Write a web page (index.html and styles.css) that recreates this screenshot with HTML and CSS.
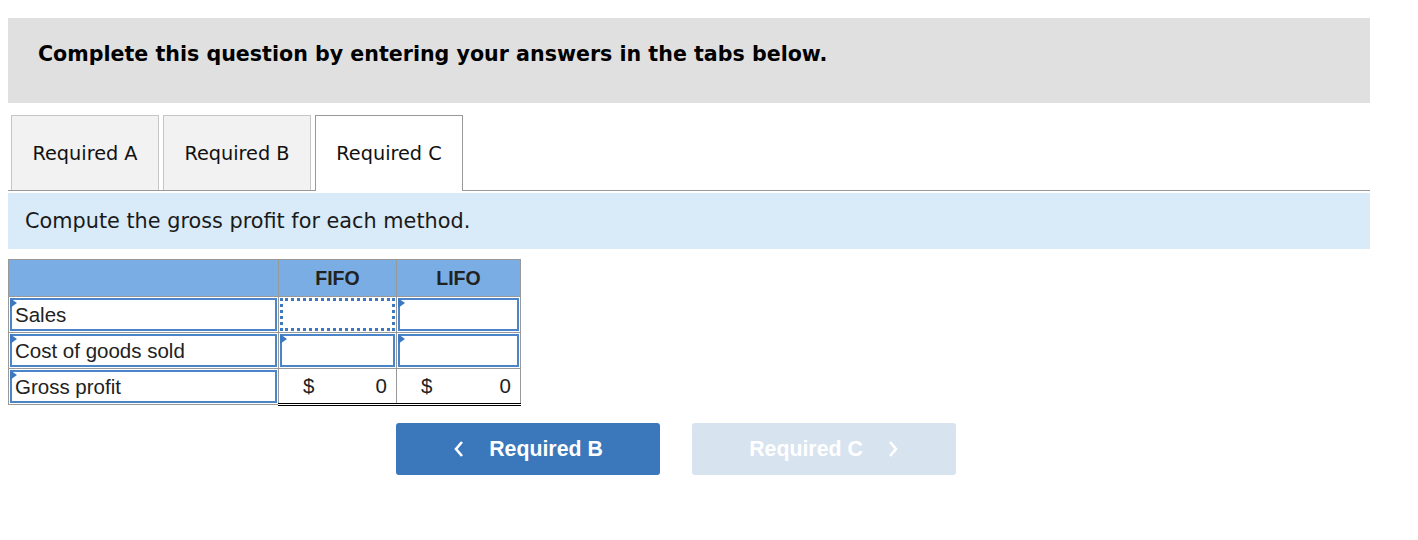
FILE: index.html
```html
<!DOCTYPE html>
<html>
<head>
<meta charset="utf-8">
<link rel="stylesheet" href="styles.css">
</head>
<body>
<div class="page">
  <div class="instructions">Complete this question by entering your answers in the tabs below.</div>
  <div class="tabs">
    <div class="tab">Required A</div>
    <div class="tab">Required B</div>
    <div class="tab active">Required C</div>
  </div>
  <div class="prompt">Compute the gross profit for each method.</div>
  <table class="grid">
    <tr class="head">
      <th class="label-col"></th>
      <th class="num-col">FIFO</th>
      <th class="num-col wide">LIFO</th>
    </tr>
    <tr>
      <td><div class="box flag">Sales</div></td>
      <td><div class="box focus"></div></td>
      <td><div class="box flag"></div></td>
    </tr>
    <tr>
      <td><div class="box flag">Cost of goods sold</div></td>
      <td><div class="box flag"></div></td>
      <td><div class="box flag"></div></td>
    </tr>
    <tr class="total">
      <td><div class="box flag">Gross profit</div></td>
      <td class="sum"><span>$</span><span>0</span></td>
      <td class="sum"><span>$</span><span>0</span></td>
    </tr>
  </table>
  <div class="nav">
    <div class="btn prev">
      <svg width="12" height="18" viewBox="0 0 12 18"><path d="M9 2 L3 9 L9 16" fill="none" stroke="#fff" stroke-width="2.6"/></svg>
      <span>Required B</span>
    </div>
    <div class="btn next">
      <span>Required C</span>
      <svg width="12" height="18" viewBox="0 0 12 18"><path d="M3 2 L9 9 L3 16" fill="none" stroke="#fff" stroke-width="2.6"/></svg>
    </div>
  </div>
</div>
</body>
</html>
```
FILE: styles.css
```css
body {
  margin: 8px;
  background: #fff;
  font-family: "DejaVu Sans", Verdana, sans-serif;
  color: #000;
}
.page {
  width: 1362px;
}
.instructions {
  margin-top: 10px;
  height: 85px;
  background: #e0e0e0;
  padding: 23px 0 0 30px;
  font-weight: bold;
  font-size: 20.6px;
  line-height: 26px;
  box-sizing: border-box;
}
.tabs {
  margin-top: 12px;
  display: flex;
  gap: 4px;
  padding-left: 3px;
  border-bottom: 1px solid #999;
}
.tab {
  width: 148px;
  height: 75px;
  box-sizing: border-box;
  background: #f2f2f2;
  border: 1px solid #c6c6c6;
  border-bottom: none;
  display: flex;
  align-items: center;
  justify-content: center;
  font-size: 19.3px;
  color: #111;
}
.tab.active {
  background: #fff;
  border-color: #999;
  height: 76px;
  margin-bottom: -1px;
}
.prompt {
  margin-top: 2px;
  height: 56px;
  background: #d9eaf8;
  display: flex;
  align-items: center;
  padding-left: 17px;
  font-size: 20.8px;
  color: #1a1a1a;
}
.grid {
  margin-top: 10px;
  border-collapse: collapse;
  font-family: "Liberation Sans", Arial, sans-serif;
  font-size: 20.5px;
}
.grid th, .grid td {
  padding: 0;
  border: 1px solid #999;
}
.grid tr.head th {
  background: #7aade3;
  height: 36px;
  font-weight: bold;
  color: #222;
  font-size: 19.5px;
  vertical-align: middle;
}
.label-col { width: 269px; }
.num-col { width: 117px; }
.num-col.wide { width: 123px; }
.grid td {
  height: 36px;
  padding: 1px 1px;
  box-sizing: border-box;
}
.box {
  position: relative;
  height: 33px;
  border: 2px solid #4a85c9;
  box-sizing: border-box;
  display: flex;
  align-items: center;
  padding-left: 3px;
  color: #222;
}
.box.flag::before {
  content: "";
  position: absolute;
  left: -2px;
  top: -2px;
  border-left: 7px solid #3d79c2;
  border-top: 5px solid transparent;
  border-bottom: 5px solid transparent;
}
.box.focus {
  border: 3px dotted #3d79c2;
}
.grid tr.total td.sum {
  border-top: 1px solid #000;
  border-bottom: 3px double #000;
  padding: 0 9px 0 24px;
}
.sum {
  color: #222;
}
.sum span:first-child { float: left; }
.sum span:last-child { float: right; }
.nav {
  margin-top: 17px;
  padding-left: 388px;
  display: flex;
  gap: 32px;
}
.btn {
  width: 264px;
  height: 52px;
  border-radius: 3px;
  display: flex;
  align-items: center;
  justify-content: center;
  gap: 24px;
  font-family: "Liberation Sans", Arial, sans-serif;
  font-weight: bold;
  font-size: 21.3px;
  color: #fff;
}
.btn.prev { background: #3a77bb; }
.btn.next { background: #d8e3f0; }
```
